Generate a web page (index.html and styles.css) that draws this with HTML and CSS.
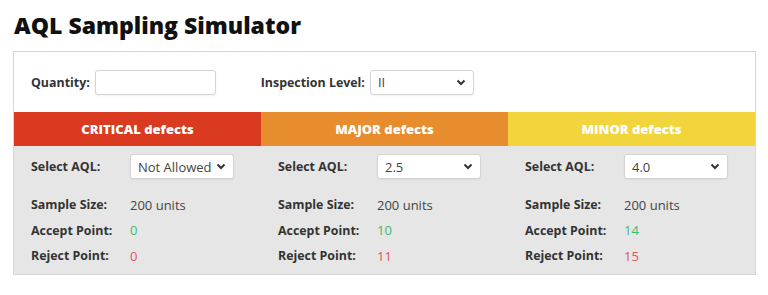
FILE: index.html
```html
<!DOCTYPE html>
<html lang="en">
<head>
  <meta charset="UTF-8">
  <meta name="viewport" content="width=device-width, initial-scale=1.0">
  <title>AQL Sampling Simulator</title>
  <link rel="stylesheet" href="styles.css">
</head>
<body>

<h1 class="title">AQL Sampling Simulator</h1>

<div class="panel">
  <div class="settings">
    <label class="field">
      <span class="label">Quantity:</span>
      <input class="input qty" type="text">
    </label>
    <label class="field">
      <span class="label">Inspection Level:</span>
      <select class="select level">
        <option>II</option>
      </select>
    </label>
  </div>

  <div class="columns">
    <div class="col">
      <div class="head critical">CRITICAL defects</div>
      <div class="body">
        <div class="row aql">
          <span class="label">Select AQL:</span>
          <select class="select aql-select"><option>Not Allowed</option></select>
        </div>
        <div class="row"><span class="label">Sample Size:</span><span class="value">200 units</span></div>
        <div class="row"><span class="label">Accept Point:</span><span class="value ok">0</span></div>
        <div class="row"><span class="label">Reject Point:</span><span class="value bad">0</span></div>
      </div>
    </div>

    <div class="col">
      <div class="head major">MAJOR defects</div>
      <div class="body">
        <div class="row aql">
          <span class="label">Select AQL:</span>
          <select class="select aql-select"><option>2.5</option></select>
        </div>
        <div class="row"><span class="label">Sample Size:</span><span class="value">200 units</span></div>
        <div class="row"><span class="label">Accept Point:</span><span class="value ok">10</span></div>
        <div class="row"><span class="label">Reject Point:</span><span class="value bad">11</span></div>
      </div>
    </div>

    <div class="col">
      <div class="head minor">MINOR defects</div>
      <div class="body">
        <div class="row aql">
          <span class="label">Select AQL:</span>
          <select class="select aql-select"><option>4.0</option></select>
        </div>
        <div class="row"><span class="label">Sample Size:</span><span class="value">200 units</span></div>
        <div class="row"><span class="label">Accept Point:</span><span class="value ok">14</span></div>
        <div class="row"><span class="label">Reject Point:</span><span class="value bad">15</span></div>
      </div>
    </div>
  </div>
</div>

</body>
</html>
```

FILE: styles.css
```css
body {
  font-family: "Open Sans", Arial, sans-serif;
  margin: 0;
  padding: 0 12px 0 13px;
  background-color: #fff;
  color: #2b2b2b;
}
.title {
  font-size: 23px;
  font-weight: 800;
  margin: 9px 0 10px 1px;
  color: #111;
  letter-spacing: 0;
}
.panel {
  border: 1px solid #d6d6d6;
}
.settings {
  display: flex;
  align-items: center;
  height: 60px;
  padding-left: 17px;
  gap: 45px;
}
.field {
  display: flex;
  align-items: center;
  gap: 5px;
}
.label {
  font-size: 12.4px;
  font-weight: 700;
  color: #333;
}
.input,
.select {
  font-family: inherit;
  font-size: 13px;
  color: #444;
  height: 25px;
  border: 1px solid #d4d4d4;
  border-radius: 3px;
  background-color: #fff;
  box-shadow: 0 1px 2px rgba(0, 0, 0, 0.06);
  box-sizing: border-box;
}
.qty {
  width: 121px;
}
.select {
  appearance: none;
  -webkit-appearance: none;
  padding: 0 22px 0 7px;
  background-image: url("data:image/svg+xml,%3Csvg xmlns='http://www.w3.org/2000/svg' width='10' height='7' viewBox='0 0 10 7'%3E%3Cpath d='M1.5 1.5 L5 5 L8.5 1.5' fill='none' stroke='%23333' stroke-width='2'/%3E%3C/svg%3E");
  background-repeat: no-repeat;
  background-position: right 7px center;
}
.level {
  width: 104px;
}
.columns {
  display: grid;
  grid-template-columns: repeat(3, 1fr);
  background-color: #e6e6e6;
}
.head {
  height: 34px;
  line-height: 34px;
  text-align: center;
  color: #fff;
  font-size: 13px;
  font-weight: 800;
}
.critical {
  background-color: #d93a20;
}
.major {
  background-color: #e88d2e;
}
.minor {
  background-color: #f2d43c;
}
.body {
  padding: 8px 17px 5px;
}
.row {
  display: flex;
  align-items: center;
  height: 25.5px;
}
.row.aql {
  height: 25px;
  margin-bottom: 13px;
}
.row .label {
  width: 99px;
  flex: none;
}
.aql-select {
  width: 104px;
}
.value {
  font-size: 13px;
  color: #444;
}
.ok {
  color: #3dbb6e;
}
.bad {
  color: #e0555a;
}
```
